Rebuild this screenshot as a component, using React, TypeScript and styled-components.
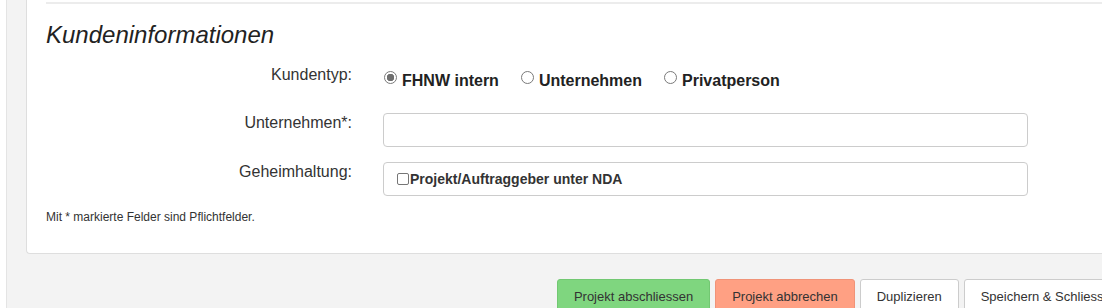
import React from 'react';
import styled, { createGlobalStyle } from 'styled-components';

const GlobalStyle = createGlobalStyle`
  html, body {
    margin: 0;
    padding: 0;
    background: #fff;
    overflow: hidden;
  }
  body {
    font-family: "Liberation Sans", Arial, sans-serif;
    color: #333;
  }
`;

type KundenTyp = 'intern' | 'firma' | 'privat';

const kundenTypen: { id: KundenTyp; label: string }[] = [
  { id: 'intern', label: 'FHNW intern' },
  { id: 'firma', label: 'Unternehmen' },
  { id: 'privat', label: 'Privatperson' },
];

const App: React.FC = () => {
  const [typ, setTyp] = React.useState<KundenTyp>('intern');
  const [nda, setNda] = React.useState(false);

  return (
    <>
      <GlobalStyle />
      <Shell>
        <Gutter />
        <Main>
          <Card>
            <Divider />
            <Heading>Kundeninformationen</Heading>
            <FormGrid>
              <Label>Kundentyp:</Label>
              <RadioGroup>
                {kundenTypen.map((k) => (
                  <RadioOption key={k.id} onClick={() => setTyp(k.id)}>
                    <RadioDot checked={typ === k.id} />
                    {k.label}
                  </RadioOption>
                ))}
              </RadioGroup>

              <Label>Unternehmen*:</Label>
              <TextInput type="text" />

              <Label>Geheimhaltung:</Label>
              <FakeInput onClick={() => setNda(!nda)}>
                <CheckBox checked={nda} />
                Projekt/Auftraggeber unter NDA
              </FakeInput>
            </FormGrid>
            <Note>Mit * markierte Felder sind Pflichtfelder.</Note>
          </Card>

          <Actions>
            <Button variant="success">Projekt abschliessen</Button>
            <Button variant="danger">Projekt abbrechen</Button>
            <Button>Duplizieren</Button>
            <Button>Speichern &amp; Schliessen</Button>
          </Actions>
        </Main>
      </Shell>
    </>
  );
};

export default App;

const Shell = styled.div`
  display: flex;
  width: 1160px;
  height: 308px;
`;

const Gutter = styled.div`
  width: 6px;
  flex-shrink: 0;
  background: #fff;
`;

const Main = styled.div`
  flex: 1;
  display: flex;
  flex-direction: column;
  background: #f3f3f3;
  border-left: 1px solid #e4e4e4;
  padding-left: 19px;
`;

const Card = styled.div`
  background: #fff;
  border-left: 1px solid #dedede;
  border-bottom: 1px solid #dedede;
  border-bottom-left-radius: 4px;
  padding: 2px 0 27px 19px;
`;

const Divider = styled.div`
  height: 2px;
  background: #ececec;
`;

const Heading = styled.h3`
  margin: 17px 0 0;
  font-size: 24px;
  line-height: 28px;
  font-style: italic;
  font-weight: normal;
  color: #222;
`;

const FormGrid = styled.div`
  display: grid;
  grid-template-columns: 306px 645px;
  grid-template-rows: 33px 34px 34px;
  column-gap: 31px;
  row-gap: 15px;
  margin-top: 16px;
`;

const Label = styled.label`
  text-align: right;
  font-size: 16px;
  line-height: 20px;
  color: #333;
`;

const RadioGroup = styled.div`
  display: flex;
  gap: 22px;
  padding: 6px 0 0 1px;
`;

const RadioOption = styled.label`
  display: flex;
  align-items: flex-start;
  gap: 5px;
  font-size: 16px;
  line-height: 20px;
  font-weight: bold;
  color: #222;
  cursor: pointer;
`;

const RadioDot = styled.span<{ checked: boolean }>`
  width: 13px;
  height: 13px;
  box-sizing: border-box;
  border: 1px solid #7a7a7a;
  border-radius: 50%;
  background: ${({ checked }) =>
    checked ? 'radial-gradient(circle, #6f6f6f 0 3.5px, #fff 4px)' : '#fff'};
  flex-shrink: 0;
`;

const TextInput = styled.input`
  box-sizing: border-box;
  height: 34px;
  width: 100%;
  margin: 0;
  border: 1px solid #ccc;
  border-radius: 4px;
  padding: 0 12px;
  font: inherit;
  font-size: 14px;
  outline: none;
`;

const FakeInput = styled.div`
  box-sizing: border-box;
  height: 34px;
  display: flex;
  align-items: center;
  border: 1px solid #ccc;
  border-radius: 4px;
  padding-left: 13px;
  font-size: 14px;
  font-weight: bold;
  color: #333;
  cursor: pointer;
`;

const CheckBox = styled.span<{ checked: boolean }>`
  width: 12px;
  height: 12px;
  box-sizing: border-box;
  border: 1px solid #767676;
  border-radius: 2px;
  margin-right: 1px;
  background: ${({ checked }) => (checked ? '#767676' : '#fff')};
  flex-shrink: 0;
`;

const Note = styled.div`
  margin-top: 13px;
  font-size: 12px;
  line-height: 17px;
  color: #333;
`;

const Actions = styled.div`
  display: flex;
  justify-content: flex-end;
  gap: 5px;
  margin-top: 25px;
  padding-right: 25px;
`;

const buttonColors = {
  success: { bg: '#7fd67f', border: '#72c872' },
  danger: { bg: '#ffa083', border: '#f09378' },
  default: { bg: '#fff', border: '#ccc' },
};

const Button = styled.button<{ variant?: 'success' | 'danger' }>`
  height: 34px;
  padding: 0 16px;
  border-radius: 3px;
  border: 1px solid ${({ variant }) => buttonColors[variant || 'default'].border};
  background: ${({ variant }) => buttonColors[variant || 'default'].bg};
  font-family: inherit;
  font-size: 13px;
  color: #333;
  white-space: nowrap;
  cursor: pointer;
`;
